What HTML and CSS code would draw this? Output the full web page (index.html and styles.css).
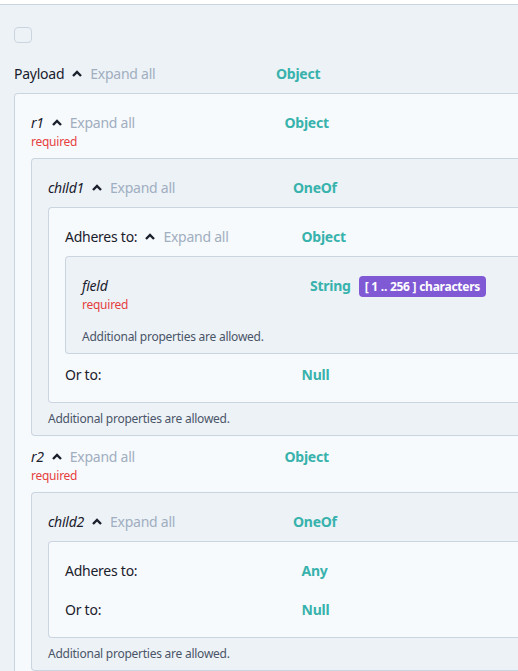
FILE: index.html
```html
<!DOCTYPE html>
<html lang="en">

<head>
   <meta charset="UTF-8">
   <meta name="viewport" content="width=device-width, initial-scale=1.0">
   <title>Payload schema</title>
   <link rel="stylesheet" href="styles.css">
</head>

<body>
   <div class="schema">
      <input type="checkbox" class="toggle">

      <!-- Payload -->
      <div class="prop-head">
         <div class="prop-name">
            <div class="name-line">
               <span class="name">Payload</span>
               <svg class="chevron" width="10" height="7" viewBox="0 0 10 7"><path d="M1 6 L5 2 L9 6" /></svg>
               <span class="expand">Expand all</span>
            </div>
         </div>
         <div class="prop-type">Object</div>
      </div>

      <div class="card light">
         <!-- r1 -->
         <div class="prop-head">
            <div class="prop-name">
               <div class="name-line">
                  <span class="name key">r1</span>
                  <svg class="chevron" width="10" height="7" viewBox="0 0 10 7"><path d="M1 6 L5 2 L9 6" /></svg>
                  <span class="expand">Expand all</span>
               </div>
               <div class="required">required</div>
            </div>
            <div class="prop-type">Object</div>
         </div>

         <div class="card gray">
            <div class="prop-head">
               <div class="prop-name">
                  <div class="name-line">
                     <span class="name key">child1</span>
                     <svg class="chevron" width="10" height="7" viewBox="0 0 10 7"><path d="M1 6 L5 2 L9 6" /></svg>
                     <span class="expand">Expand all</span>
                  </div>
               </div>
               <div class="prop-type">OneOf</div>
            </div>

            <div class="card light">
               <div class="prop-head">
                  <div class="prop-name">
                     <div class="name-line">
                        <span class="name">Adheres to:</span>
                        <svg class="chevron" width="10" height="7" viewBox="0 0 10 7"><path d="M1 6 L5 2 L9 6" /></svg>
                        <span class="expand">Expand all</span>
                     </div>
                  </div>
                  <div class="prop-type">Object</div>
               </div>

               <div class="card gray">
                  <div class="prop-head">
                     <div class="prop-name">
                        <div class="name-line">
                           <span class="name key">field</span>
                        </div>
                        <div class="required">required</div>
                     </div>
                     <div class="prop-type">String <span class="badge">[ 1 .. 256 ] characters</span></div>
                  </div>
                  <p class="note">Additional properties are allowed.</p>
               </div>

               <div class="prop-head">
                  <div class="prop-name">
                     <div class="name-line"><span class="name">Or to:</span></div>
                  </div>
                  <div class="prop-type">Null</div>
               </div>
            </div>
            <p class="note">Additional properties are allowed.</p>
         </div>

         <!-- r2 -->
         <div class="prop-head">
            <div class="prop-name">
               <div class="name-line">
                  <span class="name key">r2</span>
                  <svg class="chevron" width="10" height="7" viewBox="0 0 10 7"><path d="M1 6 L5 2 L9 6" /></svg>
                  <span class="expand">Expand all</span>
               </div>
               <div class="required">required</div>
            </div>
            <div class="prop-type">Object</div>
         </div>

         <div class="card gray">
            <div class="prop-head">
               <div class="prop-name">
                  <div class="name-line">
                     <span class="name key">child2</span>
                     <svg class="chevron" width="10" height="7" viewBox="0 0 10 7"><path d="M1 6 L5 2 L9 6" /></svg>
                     <span class="expand">Expand all</span>
                  </div>
               </div>
               <div class="prop-type">OneOf</div>
            </div>

            <div class="card light">
               <div class="prop-head">
                  <div class="prop-name">
                     <div class="name-line"><span class="name">Adheres to:</span></div>
                  </div>
                  <div class="prop-type">Any</div>
               </div>
               <div class="prop-head">
                  <div class="prop-name">
                     <div class="name-line"><span class="name">Or to:</span></div>
                  </div>
                  <div class="prop-type">Null</div>
               </div>
            </div>
            <p class="note">Additional properties are allowed.</p>
         </div>
      </div>
   </div>
</body>

</html>
```

FILE: styles.css
```css
/* pagina base */
html,
body {
   margin: 0;
   overflow: hidden;
}

body {
   font-family: "Noto Sans", "Open Sans", sans-serif;
   letter-spacing: -0.25px;
   color: #1a202c;
   padding-top: 4px;
   background: #ffffff;
}

/* contenedor del esquema */
.schema {
   width: 524px;
   padding: 22px 0 40px 14px;
   background: #edf2f7;
   border-top: 1px solid #cbd5e0;
}

.toggle {
   appearance: none;
   display: block;
   width: 18px;
   height: 16px;
   margin: 0 0 11px 0;
   border: 1px solid #cbd5e0;
   border-radius: 4px;
   background: #edf2f7;
}

/* filas de propiedades */
.prop-head {
   display: flex;
   padding: 10px 0 9px 0;
}

.prop-name {
   width: 50%;
   flex-shrink: 0;
}

.name-line {
   display: flex;
   align-items: center;
   gap: 8px;
   height: 20px;
   font-size: 14px;
   line-height: 20px;
}

.name.key {
   font-style: italic;
}

.chevron {
   margin-top: -1px;
}

.chevron path {
   fill: none;
   stroke: #1a202c;
   stroke-width: 2.4;
}

.expand {
   color: #a0aec0;
}

.required {
   color: #e53e3e;
   font-size: 12px;
   line-height: 15px;
   padding-top: 1px;
}

.prop-type {
   display: flex;
   align-items: flex-start;
   gap: 8px;
   font-size: 14px;
   line-height: 20px;
   font-weight: bold;
   color: #38b2ac;
}

.badge {
   display: inline-block;
   padding: 0 6px;
   height: 21px;
   line-height: 21px;
   font-size: 12px;
   font-weight: bold;
   color: #ffffff;
   background: #805ad5;
   border-radius: 4px;
}

/* tarjetas anidadas */
.card {
   border: 1px solid #cbd5e0;
   border-right: none;
   border-radius: 4px 0 0 4px;
   padding: 9px 0 8px 16px;
   margin-bottom: 1px;
}

.card.light {
   background: #f7fafc;
}

.card.gray {
   background: #edf2f7;
}

.note {
   margin: 8px 0 0 0;
   font-size: 12px;
   line-height: 16px;
   color: #4a5568;
}
```
